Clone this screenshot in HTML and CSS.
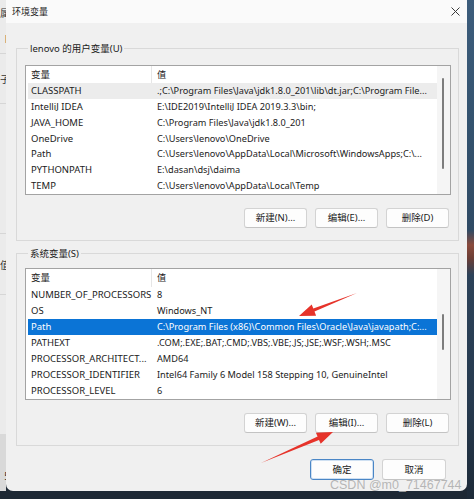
FILE: index.html
```html
<!DOCTYPE html>
<html lang="zh-CN">
<head>
<meta charset="utf-8">
<title>环境变量</title>
<link rel="stylesheet" href="styles.css">
</head>
<body>
<div class="screen">
  <div class="bgwin">
    <div class="frag f1"><span>属</span></div>
    <div class="frag f2"><span>F</span></div>
    <div class="frag f3"><span>子</span></div>
    <div class="frag f4"></div>
    <div class="frag f5"><span>值</span></div>
    <div class="frag f6"></div>
    <div class="bgwin-foot">
      <div class="frag f7"><span>J</span></div>
      <div class="frag f7"><span>J</span></div>
      <div class="frag f7"><span>5</span></div>
      <div class="frag f7"><span>!</span></div>
    </div>
  </div>

  <div class="dialog">
    <div class="titlebar">
      <span class="title">环境变量</span>
      <svg class="close" width="9" height="9" viewBox="0 0 9 9"><path d="M0.5 0.5 L8.5 8.5 M8.5 0.5 L0.5 8.5" stroke="#3a3a3a" stroke-width="1" fill="none"/></svg>
    </div>
    <div class="dlg-body">
      <fieldset class="group group-user">
        <legend>lenovo 的用户变量(U)</legend>
        <div class="list list-user">
          <div class="list-main">
            <div class="lrow lhead"><span class="c-name">变量</span><span class="c-val">值</span></div>
            <div class="lrow hover"><span class="c-name">CLASSPATH</span><span class="c-val">.;C:\Program Files\Java\jdk1.8.0_201\lib\dt.jar;C:\Program File...</span></div>
            <div class="lrow"><span class="c-name">IntelliJ IDEA</span><span class="c-val">E:\IDE2019\IntelliJ IDEA 2019.3.3\bin;</span></div>
            <div class="lrow"><span class="c-name">JAVA_HOME</span><span class="c-val">C:\Program Files\Java\jdk1.8.0_201</span></div>
            <div class="lrow"><span class="c-name">OneDrive</span><span class="c-val">C:\Users\lenovo\OneDrive</span></div>
            <div class="lrow"><span class="c-name">Path</span><span class="c-val">C:\Users\lenovo\AppData\Local\Microsoft\WindowsApps;C:\...</span></div>
            <div class="lrow"><span class="c-name">PYTHONPATH</span><span class="c-val">E:\dasan\dsj\daima</span></div>
            <div class="lrow"><span class="c-name">TEMP</span><span class="c-val">C:\Users\lenovo\AppData\Local\Temp</span></div>
          </div>
          <div class="vscroll"><div class="thumb thumb-user"></div></div>
        </div>
        <div class="btnrow">
          <button class="btn">新建(N)...</button>
          <button class="btn">编辑(E)...</button>
          <button class="btn">删除(D)</button>
        </div>
      </fieldset>

      <fieldset class="group group-sys">
        <legend>系统变量(S)</legend>
        <div class="list list-sys">
          <div class="list-main">
            <div class="lrow lhead"><span class="c-name">变量</span><span class="c-val">值</span></div>
            <div class="lrow"><span class="c-name">NUMBER_OF_PROCESSORS</span><span class="c-val">8</span></div>
            <div class="lrow"><span class="c-name">OS</span><span class="c-val">Windows_NT</span></div>
            <div class="lrow selected"><span class="c-name">Path</span><span class="c-val">C:\Program Files (x86)\Common Files\Oracle\Java\javapath;C:...</span></div>
            <div class="lrow"><span class="c-name">PATHEXT</span><span class="c-val">.COM;.EXE;.BAT;.CMD;.VBS;.VBE;.JS;.JSE;.WSF;.WSH;.MSC</span></div>
            <div class="lrow"><span class="c-name">PROCESSOR_ARCHITECT...</span><span class="c-val">AMD64</span></div>
            <div class="lrow"><span class="c-name">PROCESSOR_IDENTIFIER</span><span class="c-val">Intel64 Family 6 Model 158 Stepping 10, GenuineIntel</span></div>
            <div class="lrow"><span class="c-name">PROCESSOR_LEVEL</span><span class="c-val">6</span></div>
          </div>
          <div class="vscroll"><div class="thumb thumb-sys"></div></div>
        </div>
        <div class="btnrow">
          <button class="btn">新建(W)...</button>
          <button class="btn">编辑(I)...</button>
          <button class="btn">删除(L)</button>
        </div>
      </fieldset>

      <div class="footer">
        <button class="btn btn-wide btn-default">确定</button>
        <button class="btn btn-wide">取消</button>
      </div>
    </div>
  </div>

  <div class="desk-right"></div>
</div>

<svg class="annot" width="474" height="499" viewBox="0 0 474 499">
  <polygon fill="#e6332a" points="357,293 313.3,308.4 311.7,304.5 299,316 316.1,315.7 314.5,311.6"/>
  <polygon fill="#e6332a" points="261,463 317.6,436.6 315.9,432.8 333,432 320.7,443.8 319,440"/>
</svg>
<div class="watermark">CSDN @m0_71467744</div>
</body>
</html>
```

FILE: styles.css
```css
* { box-sizing: border-box; }

html, body {
  margin: 0;
  padding: 0;
}

body {
  width: 474px;
  height: 499px;
  overflow: hidden;
  position: relative;
  background: #1d2834;
  font-family: "Noto Sans", "Noto Sans CJK SC", sans-serif;
  font-size: 9.5px;
  color: #1b1b1b;
}

.screen {
  display: flex;
  height: 499px;
  align-items: flex-start;
}

/* background window at the left edge */
.bgwin {
  width: 6px;
  height: 491px;
  background: #ebebeb;
  display: flex;
  flex-direction: column;
  overflow: hidden;
}

.frag {
  display: flex;
  justify-content: flex-end;
  align-items: center;
  overflow: hidden;
  font-size: 10px;
  color: #333;
  flex: none;
}
.frag span { flex: none; margin-right: -4px; }

.f1 { height: 24px; }
.f2 { height: 30px; border-bottom: 1px solid #d6d6d6; }
.f3 { height: 50px; border-bottom: 1px solid #d6d6d6; }
.f4 { height: 130px; border-bottom: 1px solid #d6d6d6; }
.f5 { height: 60px; }
.f6 { height: 140px; border-top: 1px solid #d6d6d6; }
.f7 { height: 15px; color: #2a2a2a; }

.bgwin-foot {
  flex: 1;
  background: #d9d9d9;
  padding-top: 4px;
  display: flex;
  flex-direction: column;
}

/* dialog */
.dialog {
  width: 461px;
  height: 491px;
  background: #f0f0f0;
  border-radius: 0 0 7px 7px;
  overflow: hidden;
  flex: none;
}

.titlebar {
  height: 23px;
  background: #fafafa;
  display: flex;
  align-items: center;
  justify-content: space-between;
  padding: 0 7px 0 6px;
}

.title {
  font-size: 9px;
  color: #1a1a1a;
}

.close { display: block; }

.dlg-body {
  padding: 17px 8px 0 10px;
}

.group {
  margin: 0;
  min-width: 0;
  border: 1px solid #d9d9d9;
  padding: 8px 7px 12px 8px;
}

.group legend {
  line-height: 17px;
  padding: 0 2px;
  margin-left: 3px;
  color: #1b1b1b;
}

.group-sys {
  margin-top: 4px;
  padding-top: 6px;
}

.list {
  display: flex;
  background: #fff;
  border: 1px solid #a3a3a3;
  height: 130px;
}
.list-sys { height: 132px; }

.list-main {
  flex: 1;
  min-width: 0;
  overflow: hidden;
}

.lrow {
  display: flex;
  align-items: center;
  height: 15.8px;
  margin-left: 2px;
  white-space: nowrap;
  line-height: 14px;
}
.list-sys .lrow { height: 16px; }

.lrow.lhead { height: 17.4px; }
.list-sys .lrow.lhead { height: 18px; }

.lrow.hover { background: #ececec; }
.lrow.selected { background: #0b74d6; color: #fff; }

.c-name {
  width: 124px;
  flex: none;
  padding-left: 3px;
  overflow: hidden;
  text-overflow: ellipsis;
}

.lhead .c-name {
  align-self: stretch;
  display: flex;
  align-items: center;
  border-right: 1px solid #e6e6e6;
}

.c-val {
  flex: 1;
  min-width: 0;
  padding-left: 5px;
  padding-right: 4px;
  overflow: hidden;
  text-overflow: ellipsis;
  font-size: 9.2px;
}

.vscroll {
  width: 13px;
  flex: none;
  background: #f5f5f5;
  padding-left: 5px;
}

.thumb {
  width: 2px;
  background: #7d7d7d;
  border-radius: 1px;
}
.thumb-user { margin-top: 12px; height: 91px; }
.thumb-sys { margin-top: 45px; height: 36px; }

.btnrow {
  display: flex;
  justify-content: flex-end;
  gap: 8px;
  margin-top: 13px;
  padding-right: 2px;
}

.btn {
  width: 63px;
  height: 20px;
  padding: 0;
  margin: 0;
  background: #fdfdfd;
  border: 1px solid #d3d3d3;
  border-bottom-color: #c3c3c3;
  border-radius: 3px;
  font-family: "Noto Sans", "Noto Sans CJK SC", sans-serif;
  font-size: 9.5px;
  color: #1b1b1b;
  line-height: 1;
}

.btn-wide { height: 21px; width: 64px; }

.btn-default {
  border: 1px solid #4a86c6;
  box-shadow: inset 0 0 0 1px #cfe0f2;
}

.footer {
  display: flex;
  justify-content: flex-end;
  gap: 8px;
  margin-top: 13px;
  padding-right: 13px;
}

/* desktop at the right edge */
.desk-right {
  width: 7px;
  height: 499px;
  flex: none;
  background: linear-gradient(to bottom,
    #3d5d7c 0px, #34536f 120px, #2f4a64 230px,
    #8a4a3c 245px, #6c3e36 258px, #2c4259 275px,
    #263a4f 400px, #1d2a38 499px);
}

/* annotation overlays */
.annot {
  position: absolute;
  left: 0;
  top: 0;
  pointer-events: none;
}

.watermark {
  position: absolute;
  left: 330px;
  top: 478px;
  font-family: "Liberation Sans", Arial, sans-serif;
  font-size: 12.5px;
  line-height: 15px;
  color: rgba(178, 178, 178, 0.95);
  white-space: nowrap;
}
```
